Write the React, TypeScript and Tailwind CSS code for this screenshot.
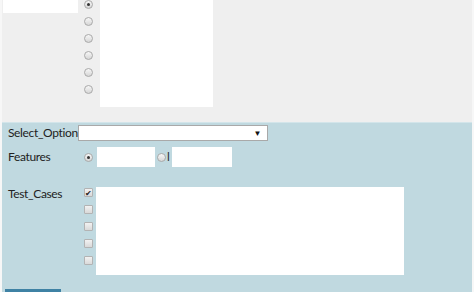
function Radio({ checked = false }: { checked?: boolean }) {
  return (
    <span className="flex h-[9px] w-[9px] shrink-0 items-center justify-center rounded-full border border-[#a9a9a9] bg-gradient-to-b from-[#f7f7f7] to-[#d6d6d6]">
      {checked && <span className="h-[3px] w-[3px] rounded-full bg-[#333]" />}
    </span>
  );
}

function Check({ checked = false }: { checked?: boolean }) {
  return (
    <span className="flex h-[9px] w-[9px] shrink-0 items-center justify-center rounded-[1px] border border-[#b3b3b3] bg-gradient-to-b from-[#f2f2f2] to-[#d9d9d9] text-[8px] leading-none text-[#222]">
      {checked ? "✔" : ""}
    </span>
  );
}

function App() {
  return (
    <div
      className="h-[292px] w-[474px] overflow-hidden bg-[#f7f7f7] px-[2px] text-[12px] tracking-[-0.35px] text-[#222]"
      style={{ fontFamily: "Lato, 'Open Sans', sans-serif" }}
    >
      {/* top panel */}
      <div className="flex h-[122px] items-start bg-[#efefef]">
        <div className="ml-[1px] h-[13px] w-[75px] bg-white" />
        <div className="ml-[6px] flex flex-col gap-[8px]">
          <Radio checked />
          <Radio />
          <Radio />
          <Radio />
          <Radio />
          <Radio />
        </div>
        <div className="ml-[7px] h-[107px] w-[113px] bg-white" />
      </div>

      {/* bottom panel */}
      <div className="h-[170px] border-t border-[#d3e5ea] bg-[#c0d9e0] pl-[3px] pt-[2px]">
        <div className="flex h-[16px] items-center">
          <span className="w-[73px] whitespace-nowrap pl-[3px]">Select_Option</span>
          <div className="flex h-[16px] w-[190px] items-center justify-end border border-[#a9a9a9] bg-white pr-[6px]">
            <span className="text-[8px] leading-none text-[#111]">▼</span>
          </div>
        </div>

        <div className="mt-[6px] flex h-[20px] items-center">
          <span className="w-[73px] pl-[3px]">Features</span>
          <span className="ml-[6px]">
            <Radio checked />
          </span>
          <div className="ml-[4px] h-[20px] w-[58px] bg-white" />
          <span className="ml-[2px]">
            <Radio />
          </span>
          <span className="ml-[1px] w-[5px] text-[#333]">l</span>
          <div className="h-[20px] w-[60px] bg-white" />
        </div>

        <div className="mt-[20px] flex items-start">
          <span className="mt-[1px] w-[73px] pl-[3px] leading-none">Test_Cases</span>
          <div className="ml-[6px] mt-[1px] flex flex-col gap-[8px]">
            <Check checked />
            <Check />
            <Check />
            <Check />
            <Check />
          </div>
          <div className="ml-[3px] h-[88px] w-[308px] bg-white" />
        </div>

        <div className="mt-[14px] h-[6px] w-[56px] bg-[#3f82a4]" />
      </div>
    </div>
  );
}

export default App;
